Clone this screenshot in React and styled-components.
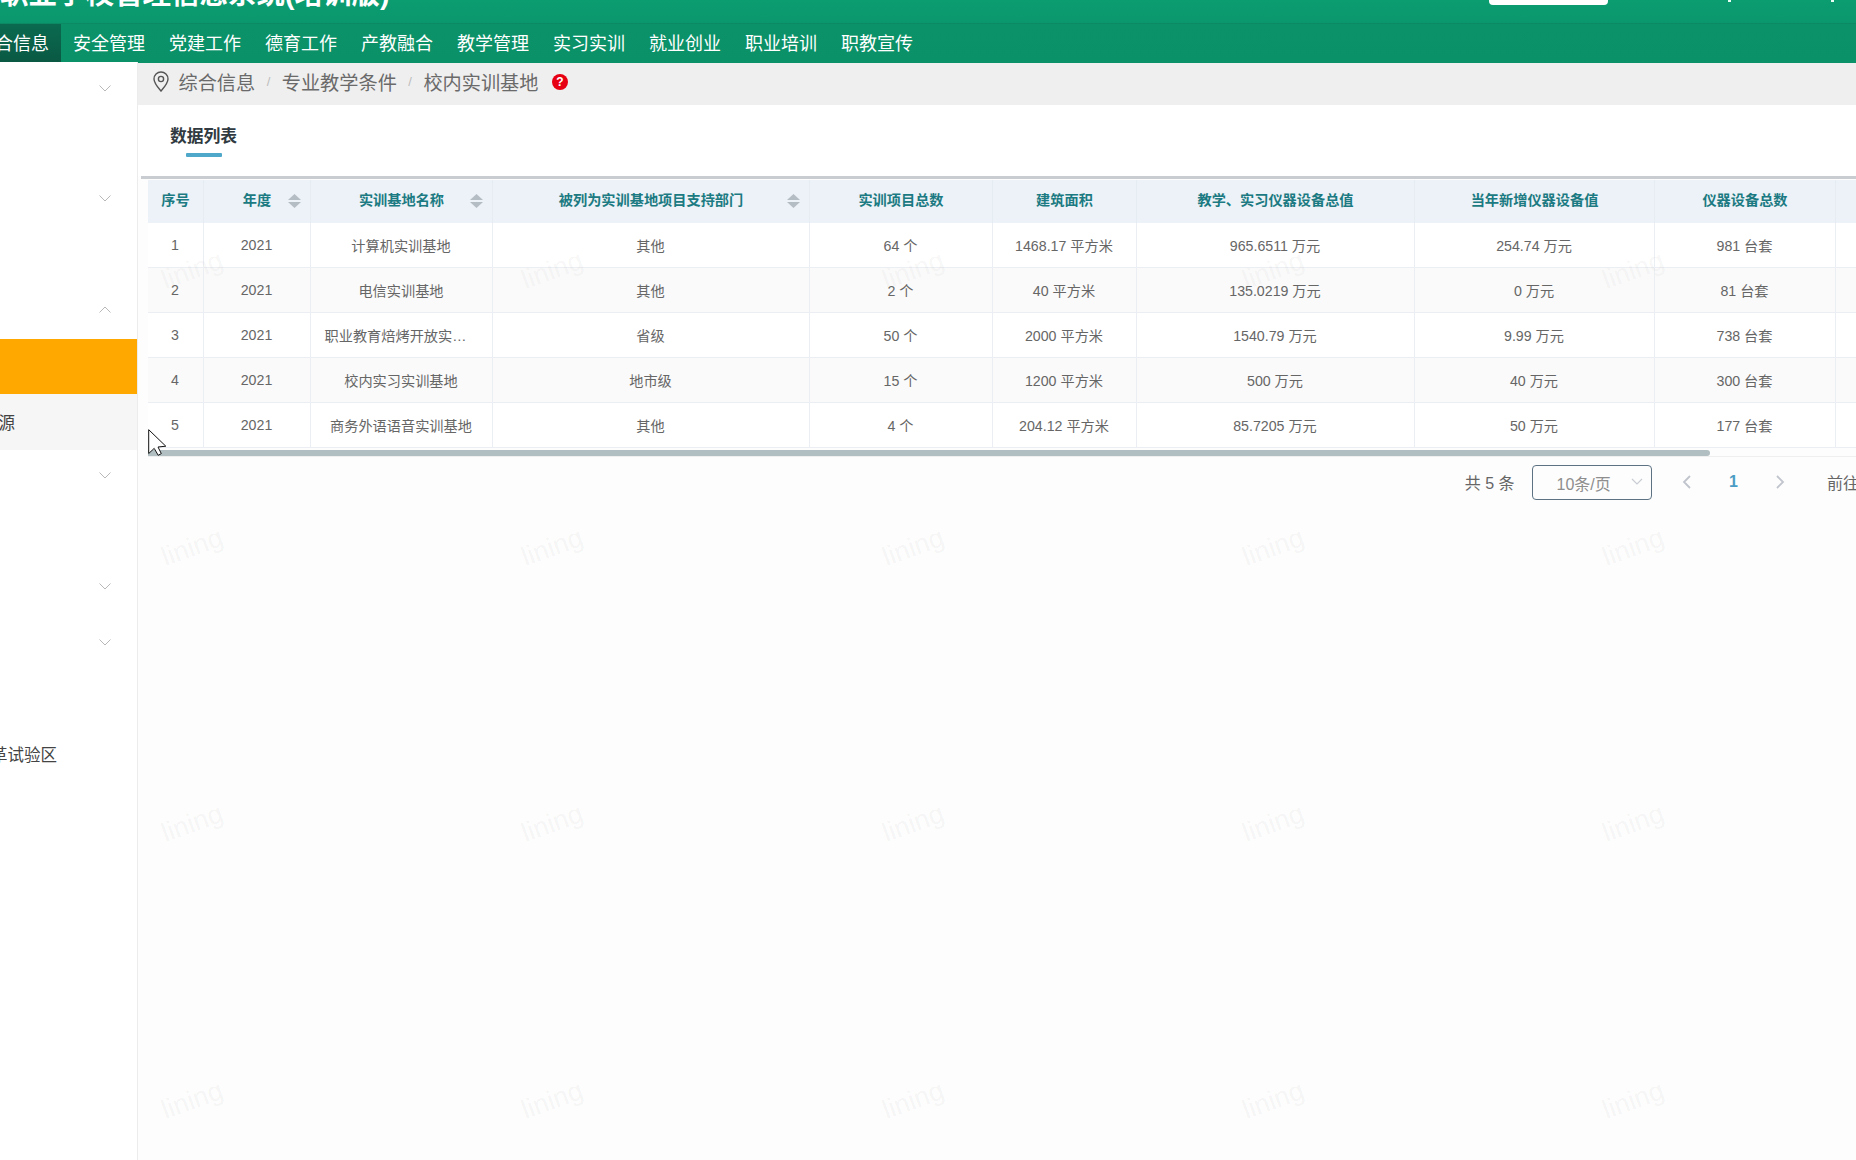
import React from "react";
import styled, { createGlobalStyle } from "styled-components";

const Global = createGlobalStyle`
  html, body { margin: 0; padding: 0; background: #fdfdfd; }
  body { font-family: "Liberation Sans", "Noto Sans CJK SC", sans-serif; overflow: hidden; }
  * { box-sizing: border-box; }
`;

const Shell = styled.div`
  position: relative;
  width: 1856px;
  height: 1160px;
  overflow: hidden;
  display: flex;
  flex-direction: column;
  background: #fdfdfd;
`;

/* ---------- header ---------- */
const TopBar = styled.header`
  height: 24px;
  flex: none;
  display: flex;
  align-items: flex-start;
  padding-right: 22.5px;
  overflow: hidden;
  background: linear-gradient(#0b9c70, #0b976d);
  border-bottom: 1px solid #0b8a63;
  color: #fff;
`;
const Title = styled.h1`
  margin: -20px 0 0 0;
  font-size: 28.5px;
  line-height: 28px;
  font-weight: 700;
  white-space: nowrap;
`;
const SearchBox = styled.div`
  width: 119px;
  height: 30px;
  margin: -25px 0 0 auto;
  background: #fff;
  border-radius: 4px;
`;
const TinyIcon = styled.span`
  width: 3px;
  height: 2px;
  background: #e8fff6;
  margin-left: ${(p) => p.$gap}px;
`;

const NavBar = styled.nav`
  height: 39px;
  flex: none;
  display: flex;
  margin-left: -35px;
  background: linear-gradient(#0b9269, #0a9168);
`;
const NavItem = styled.a`
  padding: 0 12px;
  font-size: 18px;
  line-height: 40px;
  color: #fff;
  white-space: nowrap;
  background: ${(p) => (p.$active ? "linear-gradient(#0a6a4f, #0a5843)" : "transparent")};
`;

/* ---------- body ---------- */
const Body = styled.div`
  flex: 1;
  min-height: 0;
  display: flex;
`;

const Sidebar = styled.aside`
  width: 138px;
  flex: none;
  margin-top: -1px;
  border-right: 1px solid #ececec;
  background: #fff;
  display: flex;
  flex-direction: column;
  overflow: hidden;
`;
const SideRow = styled.div`
  height: 55.4px;
  flex: none;
  display: flex;
  align-items: center;
  justify-content: space-between;
  padding-right: 26px;
  font-size: 16.5px;
  color: #444;
  white-space: nowrap;
  background: ${(p) => (p.$active ? "#fea800" : p.$soft ? "#f6f6f6" : "transparent")};
`;
const SideText = styled.span`
  margin-left: ${(p) => p.$offset}px;
  padding-bottom: 1px;
`;
const SideChevron = styled.svg`
  width: 12px;
  height: 7px;
  margin: 0 0 3px auto;
  fill: none;
  stroke: #b8b8b8;
  stroke-width: 1;
`;

const Main = styled.main`
  flex: 1;
  min-width: 0;
  overflow: hidden;
  display: flex;
  flex-direction: column;
`;

const Crumbs = styled.div`
  height: 42px;
  flex: none;
  display: flex;
  align-items: center;
  padding: 0 0 5px 15px;
  background: #efefef;
  box-shadow: 0 1px 1px #e9e9e9;
  color: #6a6a6a;
  font-size: 19.2px;
  white-space: nowrap;
`;
const PinIcon = styled.svg`
  width: 16px;
  height: 21px;
  margin-right: 9.5px;
  fill: none;
  stroke: #555;
  stroke-width: 1.4;
`;
const CrumbSep = styled.span`
  width: 26.5px;
  text-align: center;
  font-size: 13px;
  color: #bcbcbc;
`;
const HelpBadge = styled.span`
  width: 16px;
  height: 16px;
  margin-left: 13.5px;
  border-radius: 50%;
  background: #e60012;
  color: #fff;
  font-size: 12px;
  font-weight: 700;
  line-height: 16px;
  text-align: center;
`;

const TabHead = styled.div`
  height: 71px;
  flex: none;
  display: flex;
  flex-direction: column;
  padding: 21px 0 0 32px;
  background: #fff;
`;
const TabTitle = styled.span`
  width: 68px;
  font-size: 16.8px;
  line-height: 22px;
  font-weight: 700;
  color: #303a40;
  white-space: nowrap;
`;
const TabMark = styled.span`
  width: 36px;
  height: 4px;
  margin: 5px 0 0 16px;
  background: #4fa8ca;
  border-radius: 1px;
`;
const Rule = styled.div`
  height: 2.5px;
  flex: none;
  margin-left: 3px;
  background: #c9cdd1;
`;

const TableWrap = styled.div`
  margin: 1.5px 0 0 10px;
  overflow: hidden;
`;
const Grid = styled.table`
  table-layout: fixed;
  width: ${(p) => p.$width}px;
  border-collapse: separate;
  border-spacing: 0;
`;
const Col = styled.col`
  width: ${(p) => p.$w}px;
`;
const HeadCell = styled.th`
  height: 43px;
  padding: 0 9px 0 0;
  background: #ecf2f7;
  border-right: 1px solid #e6edf2;
  color: #1b7a82;
  font-size: 14.2px;
  font-weight: 700;
  white-space: nowrap;
`;
const HeadInner = styled.div`
  display: grid;
  grid-template-columns: 1fr auto 1fr;
  align-items: center;
  margin-left: 9px;
`;
const HeadLabel = styled.span`
  grid-column: 2;
  padding-bottom: 5px;
`;
const SortMark = styled.svg`
  grid-column: 3;
  justify-self: end;
  width: 13px;
  height: 14px;
  margin-bottom: 2px;
  fill: #b5bdc4;
`;
const BodyRow = styled.tr`
  background: ${(p) => (p.$striped ? "#fafafa" : "#fff")};
`;
const BodyCell = styled.td`
  height: 45px;
  padding: 0 ${(p) => (p.$clipped ? 12 : 1)}px 1px 0;
  border-right: 1px solid #ebeef2;
  border-bottom: 1px solid #ebeef2;
  color: #666;
  font-size: 14.2px;
  text-align: center;
  white-space: nowrap;
`;

const Track = styled.div`
  height: 7.5px;
  flex: none;
  margin: 1.5px 0 0 10px;
  border-bottom: 1px solid #efefef;
`;
const Thumb = styled.div`
  width: 1562px;
  height: 6px;
  background: #b2bfc2;
  border-radius: 0 3px 3px 0;
`;

const Pager = styled.div`
  height: 44px;
  flex: none;
  margin: 3px -3px 0 0;
  display: flex;
  align-items: center;
  justify-content: flex-end;
  color: #666;
  font-size: 16px;
  white-space: nowrap;
`;
const PagerSelect = styled.div`
  width: 119.5px;
  height: 35px;
  margin: 0 30px 0 18px;
  padding: 1px 8px 0 23px;
  display: flex;
  align-items: center;
  justify-content: space-between;
  border: 1px solid #5d7384;
  border-radius: 4px;
  color: #8e8e8e;
`;
const SelectCaret = styled.svg`
  width: 12px;
  height: 7px;
  margin-bottom: 2px;
  fill: none;
  stroke: #c9ccd2;
  stroke-width: 1.2;
`;
const PagerArrow = styled.svg`
  width: 10px;
  height: 16px;
  fill: none;
  stroke: #c0c4cc;
  stroke-width: 1.8;
`;
const PagerCurrent = styled.span`
  width: 10px;
  margin: 0 36.5px;
  text-align: center;
  color: #4b9cc4;
  font-weight: 700;
`;
const GoLabel = styled.span`
  margin-left: 42px;
`;

/* ---------- overlays ---------- */
const WatermarkLayer = styled.div`
  position: absolute;
  left: 12px;
  top: 132px;
  display: grid;
  grid-template-columns: repeat(5, 360.3px);
  grid-auto-rows: 276.6px;
  pointer-events: none;
`;
const Watermark = styled.span`
  display: flex;
  align-items: center;
  justify-content: center;
  font-size: 27px;
  color: rgba(60, 60, 60, 0.055);
  transform: rotate(-20deg);
`;
const Pointer = styled.svg`
  position: absolute;
  left: 148px;
  top: 429px;
  width: 19px;
  height: 27px;
  fill: #fff;
  stroke: #111;
  stroke-width: 1;
  stroke-linejoin: round;
`;

const navItems = ["综合信息", "安全管理", "党建工作", "德育工作", "产教融合", "教学管理", "实习实训", "就业创业", "职业培训", "职教宣传"];

const sideRows = [
  { chevron: "down" },
  {},
  { chevron: "down" },
  {},
  { chevron: "up" },
  { active: true },
  { soft: true, text: "资源", offset: -18 },
  { chevron: "down" },
  {},
  { chevron: "down" },
  { chevron: "down" },
  {},
  { text: "革试验区", offset: -9 },
];

const columns = [
  { w: 56, label: "序号" },
  { w: 107, label: "年度", sort: true },
  { w: 182, label: "实训基地名称", sort: true },
  { w: 317, label: "被列为实训基地项目支持部门", sort: true },
  { w: 183, label: "实训项目总数" },
  { w: 144, label: "建筑面积" },
  { w: 278, label: "教学、实习仪器设备总值" },
  { w: 240, label: "当年新增仪器设备值" },
  { w: 181, label: "仪器设备总数" },
  { w: 120, label: "" },
];

const rows = [
  ["1", "2021", "计算机实训基地", "其他", "64 个", "1468.17 平方米", "965.6511 万元", "254.74 万元", "981 台套", ""],
  ["2", "2021", "电信实训基地", "其他", "2 个", "40 平方米", "135.0219 万元", "0 万元", "81 台套", ""],
  ["3", "2021", "职业教育焙烤开放实…", "省级", "50 个", "2000 平方米", "1540.79 万元", "9.99 万元", "738 台套", ""],
  ["4", "2021", "校内实习实训基地", "地市级", "15 个", "1200 平方米", "500 万元", "40 万元", "300 台套", ""],
  ["5", "2021", "商务外语语音实训基地", "其他", "4 个", "204.12 平方米", "85.7205 万元", "50 万元", "177 台套", ""],
];

const tableWidth = columns.reduce((sum, c) => sum + c.w, 0);
const marks = Array.from({ length: 20 }, (_, i) => i);

export default function App() {
  return (
    <Shell>
      <Global />
      <TopBar>
        <Title>职业学校管理信息系统(培训版)</Title>
        <SearchBox />
        <TinyIcon $gap={119.5} />
        <TinyIcon $gap={100} />
      </TopBar>
      <NavBar>
        {navItems.map((item, i) => (
          <NavItem key={item} $active={i === 0}>{item}</NavItem>
        ))}
      </NavBar>
      <Body>
        <Sidebar>
          {sideRows.map((row, i) => (
            <SideRow key={i} $active={row.active} $soft={row.soft}>
              {row.text && <SideText $offset={row.offset}>{row.text}</SideText>}
              {row.chevron && (
                <SideChevron viewBox="0 0 12 7">
                  <polyline points={row.chevron === "down" ? "0.5,0.5 6,6 11.5,0.5" : "0.5,6.5 6,1 11.5,6.5"} />
                </SideChevron>
              )}
            </SideRow>
          ))}
        </Sidebar>
        <Main>
          <Crumbs>
            <PinIcon viewBox="0 0 16 21">
              <path d="M8 1C4.1 1 1 4.1 1 7.9c0 4.2 4.3 8.9 7 12.1 2.7-3.2 7-7.9 7-12.1C15 4.1 11.9 1 8 1z" />
              <circle cx="8" cy="8" r="2.6" />
            </PinIcon>
            <span>综合信息</span>
            <CrumbSep>/</CrumbSep>
            <span>专业教学条件</span>
            <CrumbSep>/</CrumbSep>
            <span>校内实训基地</span>
            <HelpBadge>?</HelpBadge>
          </Crumbs>
          <TabHead>
            <TabTitle>数据列表</TabTitle>
            <TabMark />
          </TabHead>
          <Rule />
          <TableWrap>
            <Grid $width={tableWidth}>
              <colgroup>
                {columns.map((c, i) => <Col key={i} $w={c.w} />)}
              </colgroup>
              <thead>
                <tr>
                  {columns.map((c, i) => (
                    <HeadCell key={i}>
                      <HeadInner>
                        <HeadLabel>{c.label}</HeadLabel>
                        {c.sort && (
                          <SortMark viewBox="0 0 13 14">
                            <polygon points="6.5,0 13,6 0,6" />
                            <polygon points="0,8 13,8 6.5,14" />
                          </SortMark>
                        )}
                      </HeadInner>
                    </HeadCell>
                  ))}
                </tr>
              </thead>
              <tbody>
                {rows.map((row, r) => (
                  <BodyRow key={r} $striped={r % 2 === 1}>
                    {row.map((cell, c) => (
                      <BodyCell key={c} $clipped={cell.endsWith("…")}>{cell}</BodyCell>
                    ))}
                  </BodyRow>
                ))}
              </tbody>
            </Grid>
          </TableWrap>
          <Track><Thumb /></Track>
          <Pager>
            <span>共 5 条</span>
            <PagerSelect>
              <span>10条/页</span>
              <SelectCaret viewBox="0 0 12 7"><polyline points="1,1 6,6 11,1" /></SelectCaret>
            </PagerSelect>
            <PagerArrow viewBox="0 0 10 16"><polyline points="8,2 2,8 8,14" /></PagerArrow>
            <PagerCurrent>1</PagerCurrent>
            <PagerArrow viewBox="0 0 10 16"><polyline points="2,2 8,8 2,14" /></PagerArrow>
            <GoLabel>前往</GoLabel>
          </Pager>
        </Main>
      </Body>
      <WatermarkLayer>
        {marks.map((m) => <Watermark key={m}>lining</Watermark>)}
      </WatermarkLayer>
      <Pointer viewBox="0 0 19 27">
        <path d="M0.7 0.7 L0.7 24.5 L6.2 19.4 L10.2 26.3 L13.3 24.6 L10 18 L17.8 17.2 Z" />
      </Pointer>
    </Shell>
  );
}
